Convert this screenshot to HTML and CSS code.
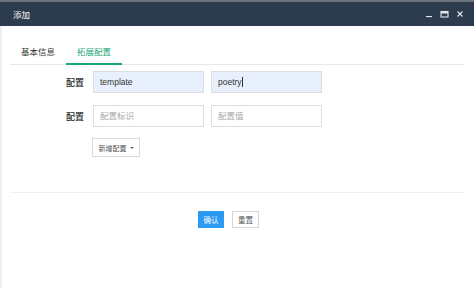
FILE: index.html
```html
<!DOCTYPE html>
<html lang="zh">
<head>
<meta charset="utf-8">
<link rel="stylesheet" href="styles.css">
</head>
<body>
<div class="win">
  <div class="titlebar">
    <span class="title">添加</span>
    <div class="ctrls">
      <svg width="8" height="8" viewBox="0 0 8 8"><rect x="1" y="6" width="6" height="1.1" fill="#e3e7ec"/></svg>
      <svg width="9" height="8" viewBox="0 0 9 8"><rect x="1" y="1.5" width="7" height="5.5" fill="none" stroke="#e3e7ec" stroke-width="1.1"/><rect x="1" y="1.5" width="7" height="2" fill="#e3e7ec"/></svg>
      <svg width="8" height="8" viewBox="0 0 8 8"><path d="M1.5 1.5 L6.5 6.5 M6.5 1.5 L1.5 6.5" stroke="#e3e7ec" stroke-width="1.1"/></svg>
    </div>
  </div>
  <div class="content">
    <div class="tabs">
      <div class="tab">基本信息</div>
      <div class="tab active">拓展配置</div>
    </div>
    <div class="form">
      <div class="row">
        <span class="label">配置</span>
        <div class="inp filled">template</div>
        <div class="inp filled">poetry<span class="cursor"></span></div>
      </div>
      <div class="row">
        <span class="label">配置</span>
        <div class="inp ph">配置标识</div>
        <div class="inp ph">配置值</div>
      </div>
      <div class="row addrow">
        <div class="addbtn">新增配置<span class="caret"></span></div>
      </div>
    </div>
    <div class="divider"></div>
    <div class="footer">
      <div class="btn primary">确认</div>
      <div class="btn">重置</div>
    </div>
  </div>
</div>
</body>
</html>
```
FILE: styles.css
```css
* { box-sizing: border-box; }
html, body { margin: 0; padding: 0; background: #fff; }
body {
  width: 474px;
  height: 288px;
  overflow: hidden;
  font-family: "Liberation Sans", "Noto Sans CJK SC", sans-serif;
  color: #333;
}
.win { width: 474px; height: 288px; display: flex; flex-direction: column; }
.titlebar {
  height: 26px;
  background: #2c3b4e;
  border-top: 2px solid #6b727b;
  display: flex;
  align-items: center;
  justify-content: space-between;
  padding: 0 10px 0 13px;
}
.title { color: #fff; font-size: 8.5px; }
.ctrls { display: flex; gap: 7px; align-items: center; }
.ctrls svg { display: block; }
.content {
  flex: 1;
  border-left: 2px solid #efefef;
  padding: 0 10px 0 8px;
}
.tabs {
  margin-top: 14px;
  height: 25px;
  border-bottom: 1px solid #e8e8e8;
  display: flex;
}
.tab {
  padding: 0 11px;
  font-size: 8.5px;
  line-height: 25px;
  height: 25px;
  color: #333;
}
.tab.active {
  color: #1aa57a;
  border-bottom: 2px solid #1aa57a;
  line-height: 24px;
}
.form { margin-top: 6px; display: flex; flex-direction: column; gap: 12px; }
.row { display: flex; align-items: center; height: 22px; }
.label {
  width: 74px;
  margin-right: 9px;
  text-align: right;
  font-size: 9px;
  font-weight: 500;
  color: #222;
}
.inp {
  width: 111px;
  height: 22px;
  border: 1px solid #dedede;
  margin-right: 7px;
  padding-left: 6px;
  font-size: 8.5px;
  line-height: 20px;
  color: #333;
  display: flex;
  align-items: center;
}
.inp.filled { background: #e8f0fe; border-color: #d8dde6; }
.inp.ph { color: #a8a8a8; background: #fff; }
.cursor { display: inline-block; width: 1px; height: 10px; background: #333; }
.addrow { margin-top: -1px; height: 19px; }
.addbtn {
  margin-left: 82px;
  width: 48px;
  height: 19px;
  border: 1px solid #dcdcdc;
  font-size: 7px;
  color: #555;
  display: flex;
  align-items: center;
  justify-content: center;
  gap: 3px;
  background: #fff;
}
.caret {
  width: 0; height: 0;
  border-left: 2px solid transparent;
  border-right: 2px solid transparent;
  border-top: 2px solid #666;
}
.divider { margin-top: 35px; height: 1px; background: #efefef; }
.footer {
  margin-top: 18px;
  display: flex;
  gap: 8px;
  padding-left: 188px;
}
.btn {
  height: 17px;
  width: 27px;
  font-size: 7.5px;
  display: flex;
  align-items: center;
  justify-content: center;
  border: 1px solid #d6d6d6;
  color: #555;
  background: #fff;
}
.btn.primary { background: #2b9af3; border-color: #2b9af3; color: #fff; width: 26px; }
```
